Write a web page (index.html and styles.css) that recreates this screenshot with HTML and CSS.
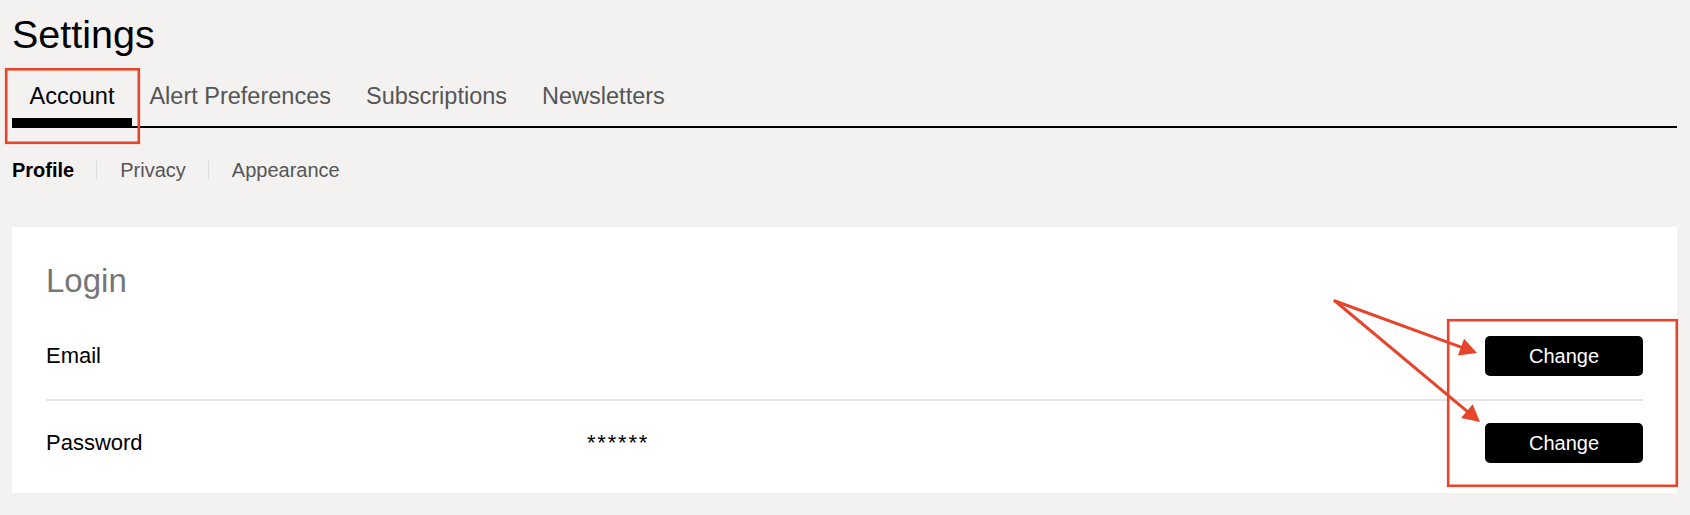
FILE: index.html
```html
<!DOCTYPE html>
<html lang="en">
<head>
    <meta charset="UTF-8">
    <meta name="viewport" content="width=device-width, initial-scale=1.0">
    <title>Settings</title>
    <link rel="stylesheet" href="styles.css">
</head>
<body>

    <div class="page">
        <h1>Settings</h1>

        <!-- Main tabs -->
        <nav class="tabs">
            <a class="tab active">Account</a>
            <a class="tab">Alert Preferences</a>
            <a class="tab">Subscriptions</a>
            <a class="tab">Newsletters</a>
        </nav>

        <!-- Sub tabs -->
        <nav class="subtabs">
            <a class="subtab active">Profile</a>
            <span class="sep"></span>
            <a class="subtab">Privacy</a>
            <span class="sep"></span>
            <a class="subtab">Appearance</a>
        </nav>

        <!-- Login card -->
        <div class="card">
            <h2>Login</h2>
            <div class="row">
                <div class="label">Email</div>
                <div class="value"></div>
                <button class="change-btn">Change</button>
            </div>
            <div class="row last">
                <div class="label">Password</div>
                <div class="value secret">******</div>
                <button class="change-btn">Change</button>
            </div>
        </div>
    </div>

    <!-- Annotation overlay -->
    <svg class="annotations" width="1690" height="515" viewBox="0 0 1690 515">
        <rect x="6.2" y="69.3" width="132.6" height="73.5" fill="none" stroke="#e6452b" stroke-width="2.6"/>
        <rect x="1448.2" y="320.2" width="228.6" height="165.6" fill="none" stroke="#e6452b" stroke-width="2.6"/>
        <line x1="1335" y1="301" x2="1461" y2="347.2" stroke="#e6452b" stroke-width="3" stroke-linecap="round"/>
        <polygon points="1477,353 1457.9,355.6 1464.1,338.7" fill="#e6452b"/>
        <line x1="1335" y1="301" x2="1466.9" y2="411.1" stroke="#e6452b" stroke-width="3" stroke-linecap="round"/>
        <polygon points="1480,422 1461.1,418 1472.7,404.2" fill="#e6452b"/>
    </svg>

</body>
</html>
```

FILE: styles.css
```css
body {
    margin: 0;
    background-color: #f3f2f0;
    font-family: "Liberation Sans", Arial, sans-serif;
    color: #000;
    position: relative;
}
.page {
    padding: 0 13px 0 12px;
}
h1 {
    margin: 11px 0 0;
    font-size: 39.5px;
    font-weight: normal;
    line-height: 46px;
}
.tabs {
    display: flex;
    border-bottom: 2px solid #000;
}
.tab {
    padding: 25px 17.5px 8px;
    font-size: 23.5px;
    line-height: 28px;
    color: #555;
    border-bottom: 8px solid transparent;
    cursor: pointer;
}
.tab.active {
    color: #000;
    border-bottom-color: #000;
}
.subtabs {
    display: flex;
    align-items: center;
    margin-top: 30px;
}
.subtab {
    font-size: 20px;
    line-height: 24px;
    color: #555;
    cursor: pointer;
}
.subtab.active {
    color: #000;
    font-weight: bold;
}
.sep {
    width: 1px;
    height: 18px;
    margin: 0 23px 0 22px;
    background-color: #dcdcdc;
}
.card {
    margin-top: 45px;
    background-color: #fff;
    padding: 34px 34px 8px;
}
.card h2 {
    margin: 0 0 11px;
    font-size: 33px;
    font-weight: normal;
    line-height: 40px;
    color: #767676;
}
.row {
    display: grid;
    grid-template-columns: 541px 1fr 158px;
    align-items: center;
    padding: 24px 0 23px;
    border-bottom: 2px solid #e4e4e4;
}
.row.last {
    padding: 22px 0;
    border-bottom: none;
}
.label {
    font-size: 22px;
}
.secret {
    font-size: 22px;
    letter-spacing: 1.8px;
}
.change-btn {
    height: 40px;
    padding: 0;
    border: none;
    border-radius: 5px;
    background-color: #000;
    color: #fff;
    font-family: inherit;
    font-size: 20px;
    cursor: pointer;
}
.annotations {
    position: absolute;
    top: 0;
    left: 0;
    pointer-events: none;
}
```
